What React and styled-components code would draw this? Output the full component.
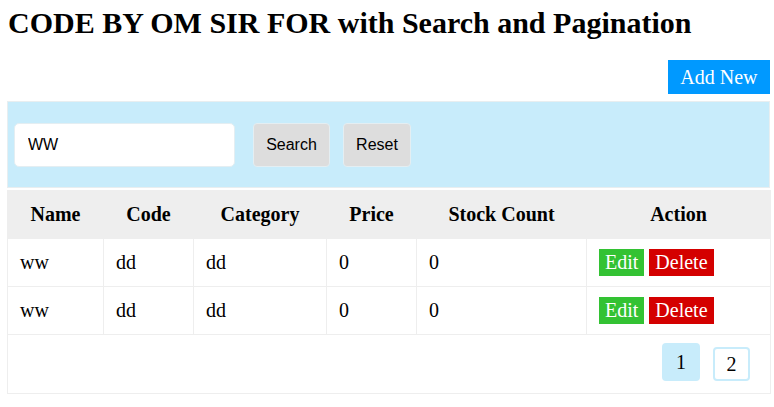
import React from "react";
import styled, { createGlobalStyle } from "styled-components";

const Global = createGlobalStyle`
  html, body { margin: 0; padding: 0; background: #fff; }
  body { font-family: "Liberation Serif", "Times New Roman", serif; color: #000; }
`;

const Page = styled.div`
  padding: 6px 4px 0 7px;
`;

const Title = styled.h1`
  margin: 0 0 20px 1px;
  font-size: 30px;
  font-weight: bold;
  font-family: "Liberation Serif", serif;
`;

const Toolbar = styled.div`
  display: flex;
  justify-content: flex-end;
  margin-bottom: 7px;
`;

const AddButton = styled.button`
  height: 34px;
  padding: 0 12.5px;
  border: none;
  background: #0099ff;
  color: #fff;
  font-family: "Liberation Serif", serif;
  font-size: 20px;
  cursor: pointer;
`;

const SearchPanel = styled.div`
  display: flex;
  align-items: center;
  background: #c8ecfb;
  border: 1px solid #e8eef0;
  padding: 21px 6px 20px;
`;

const SearchInput = styled.input`
  box-sizing: border-box;
  width: 221px;
  height: 44px;
  border: 1px solid #e4eef2;
  border-radius: 5px;
  padding: 0 13px;
  font-family: "Liberation Sans", Arial, sans-serif;
  font-size: 16px;
  color: #000;
  background: #fff;
  outline: none;
  margin-right: 18px;
`;

const GreyButton = styled.button`
  box-sizing: border-box;
  height: 44px;
  width: ${(p) => p.$w}px;
  margin-right: 13px;
  border: 1px solid #e4eef2;
  border-radius: 4px;
  background: #dddddd;
  font-family: "Liberation Sans", Arial, sans-serif;
  font-size: 16px;
  color: #000;
  cursor: pointer;
`;

const Table = styled.table`
  width: 100%;
  margin-top: 2px;
  border-collapse: collapse;
  table-layout: fixed;
  border: 1px solid #eee;
  font-size: 20px;
`;

const Th = styled.th`
  background: #eeeeee;
  padding: 12px;
  font-weight: bold;
  text-align: center;
  border: 1px solid #eee;
`;

const Td = styled.td`
  padding: ${(p) => (p.$action ? "10px 12px" : "12px")};
  border: 1px solid #eee;
  text-align: left;
  white-space: nowrap;
`;

const ActionButton = styled.button`
  display: inline-block;
  vertical-align: middle;
  height: 27px;
  padding: 0 6px;
  border: none;
  margin-right: 5px;
  background: ${(p) => (p.$danger ? "#d40000" : "#33c233")};
  color: #fff;
  font-family: "Liberation Serif", serif;
  font-size: 20px;
  cursor: pointer;
`;

const PagerCell = styled.td`
  padding: 8px 20px 12px 12px;
  border: 1px solid #eee;
`;

const Pager = styled.div`
  display: flex;
  justify-content: flex-end;
  align-items: flex-end;
  gap: 13px;
`;

const PageButton = styled.button`
  box-sizing: border-box;
  width: ${(p) => (p.$active ? 38 : 37)}px;
  height: ${(p) => (p.$active ? 38 : 34)}px;
  padding: 0;
  border: ${(p) => (p.$active ? "none" : "2px solid #c8ecfb")};
  border-radius: 4px;
  background: ${(p) => (p.$active ? "#c8ecfb" : "#fff")};
  font-family: "Liberation Serif", serif;
  font-size: 20px;
  color: #000;
  cursor: pointer;
`;

const rows = [
  { name: "ww", code: "dd", category: "dd", price: 0, stock: 0 },
  { name: "ww", code: "dd", category: "dd", price: 0, stock: 0 },
];

const widths = [96, 90, 133, 90, 170, 184];

export default function App() {
  return (
    <>
      <Global />
      <Page>
        <Title>CODE BY OM SIR FOR with Search and Pagination</Title>
        <Toolbar>
          <AddButton>Add New</AddButton>
        </Toolbar>
        <SearchPanel>
          <SearchInput defaultValue="WW" />
          <GreyButton $w={77}>Search</GreyButton>
          <GreyButton $w={68}>Reset</GreyButton>
        </SearchPanel>
        <Table>
          <colgroup>
            {widths.map((w, i) => (
              <col key={i} style={{ width: w }} />
            ))}
          </colgroup>
          <thead>
            <tr>
              <Th>Name</Th>
              <Th>Code</Th>
              <Th>Category</Th>
              <Th>Price</Th>
              <Th>Stock Count</Th>
              <Th>Action</Th>
            </tr>
          </thead>
          <tbody>
            {rows.map((r, i) => (
              <tr key={i}>
                <Td>{r.name}</Td>
                <Td>{r.code}</Td>
                <Td>{r.category}</Td>
                <Td>{r.price}</Td>
                <Td>{r.stock}</Td>
                <Td $action>
                  <ActionButton>Edit</ActionButton>
                  <ActionButton $danger>Delete</ActionButton>
                </Td>
              </tr>
            ))}
            <tr>
              <PagerCell colSpan={6}>
                <Pager>
                  <PageButton $active>1</PageButton>
                  <PageButton>2</PageButton>
                </Pager>
              </PagerCell>
            </tr>
          </tbody>
        </Table>
      </Page>
    </>
  );
}
